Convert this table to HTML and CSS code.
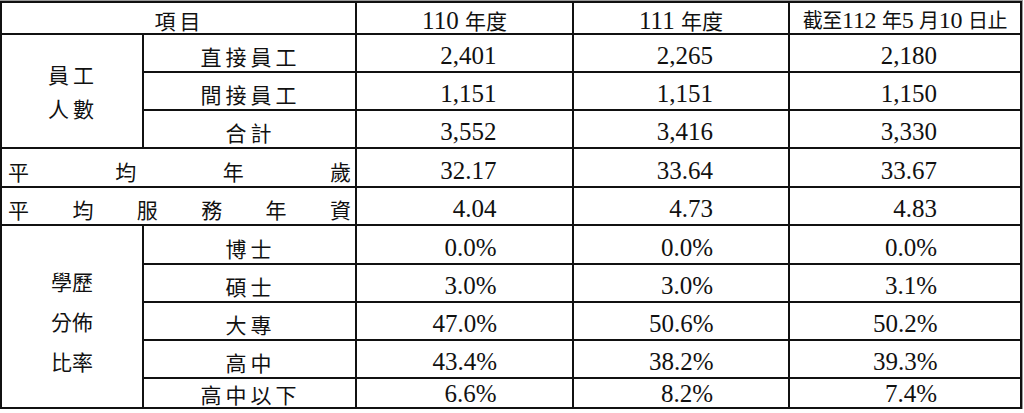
FILE: index.html
```html
<!DOCTYPE html>
<html lang="zh-Hant">
<head>
<meta charset="utf-8">
<title>員工人數統計</title>
<link rel="stylesheet" href="styles.css">
</head>
<body>
<table class="stats">
  <colgroup>
    <col class="c1"><col class="c2"><col class="c3"><col class="c4"><col class="c5">
  </colgroup>
  <thead>
    <tr class="head">
      <th colspan="2" class="lbl sp">項目</th>
      <th class="yr">110 <span class="cjk">年度</span></th>
      <th class="yr">111 <span class="cjk">年度</span></th>
      <th class="yr narrow"><span class="cjk">截至</span>112 <span class="cjk">年</span>5 <span class="cjk">月</span>10 <span class="cjk">日止</span></th>
    </tr>
  </thead>
  <tbody>
    <tr class="row">
      <td rowspan="3" class="group sp"><div class="stack"><span>員工</span><span>人數</span></div></td>
      <td class="lbl sp">直接員工</td>
      <td class="num"><span>2,401</span></td>
      <td class="num"><span>2,265</span></td>
      <td class="num"><span>2,180</span></td>
    </tr>
    <tr class="row">
      <td class="lbl sp">間接員工</td>
      <td class="num"><span>1,151</span></td>
      <td class="num"><span>1,151</span></td>
      <td class="num"><span>1,150</span></td>
    </tr>
    <tr class="row">
      <td class="lbl sp">合計</td>
      <td class="num"><span>3,552</span></td>
      <td class="num"><span>3,416</span></td>
      <td class="num"><span>3,330</span></td>
    </tr>
    <tr class="row tall">
      <td colspan="2" class="spread"><div><span>平</span><span>均</span><span>年</span><span>歲</span></div></td>
      <td class="num"><span>32.17</span></td>
      <td class="num"><span>33.64</span></td>
      <td class="num"><span>33.67</span></td>
    </tr>
    <tr class="row">
      <td colspan="2" class="spread"><div><span>平</span><span>均</span><span>服</span><span>務</span><span>年</span><span>資</span></div></td>
      <td class="num"><span>4.04</span></td>
      <td class="num"><span>4.73</span></td>
      <td class="num"><span>4.83</span></td>
    </tr>
    <tr class="row tall">
      <td rowspan="5" class="group edu"><div class="stack"><span>學歷</span><span>分佈</span><span>比率</span></div></td>
      <td class="lbl sp">博士</td>
      <td class="num"><span>0.0%</span></td>
      <td class="num"><span>0.0%</span></td>
      <td class="num"><span>0.0%</span></td>
    </tr>
    <tr class="row">
      <td class="lbl sp">碩士</td>
      <td class="num"><span>3.0%</span></td>
      <td class="num"><span>3.0%</span></td>
      <td class="num"><span>3.1%</span></td>
    </tr>
    <tr class="row">
      <td class="lbl sp">大專</td>
      <td class="num"><span>47.0%</span></td>
      <td class="num"><span>50.6%</span></td>
      <td class="num"><span>50.2%</span></td>
    </tr>
    <tr class="row">
      <td class="lbl sp">高中</td>
      <td class="num"><span>43.4%</span></td>
      <td class="num"><span>38.2%</span></td>
      <td class="num"><span>39.3%</span></td>
    </tr>
    <tr class="row last">
      <td class="lbl sp">高中以下</td>
      <td class="num"><span>6.6%</span></td>
      <td class="num"><span>8.2%</span></td>
      <td class="num"><span>7.4%</span></td>
    </tr>
  </tbody>
</table>
</body>
</html>
```

FILE: styles.css
```css
html, body {
  margin: 0;
  padding: 0;
  background: #ffffff;
}

body {
  padding: 1px 0 0 0;
}

.stats {
  border-collapse: collapse;
  table-layout: fixed;
  width: 1020px;
  border: 2px solid #111;
  box-shadow: 0 0 0 1px #9a9a9a;
  font-family: "Liberation Serif", "Noto Sans CJK TC", serif;
  font-size: 25px;
  color: #111;
}

.c1 { width: 142px; }
.c2 { width: 213px; }
.c3 { width: 217px; }
.c4 { width: 216px; }
.c5 { width: 232px; }

.stats th,
.stats td {
  border: 2px solid #111;
  padding: 0;
  text-align: center;
  vertical-align: middle;
  font-weight: normal;
  line-height: 26px;
}

.head { height: 32px; }
.row { height: 38px; }
.row.tall { height: 39px; }
.row.last { height: 30px; }

.head th {
  padding-top: 4px;
  line-height: 24px;
}

.cjk {
  font-family: "Noto Sans CJK TC", sans-serif;
  font-size: 21px;
  font-weight: 400;
}

.yr { white-space: nowrap; }

.narrow {
  font-size: 24px;
  letter-spacing: -0.3px;
}

.narrow .cjk { font-size: 20px; }

.lbl {
  font-family: "Noto Sans CJK TC", sans-serif;
  font-size: 21px;
}

.sp { letter-spacing: 4px; text-indent: 2px; }

.row .lbl,
.row .num,
.row .spread { padding-top: 6px; }

.row.last .lbl,
.row.last .num { padding-top: 1px; }

.num span {
  display: inline-block;
  width: 64px;
  text-align: right;
}

.group {
  font-family: "Noto Sans CJK TC", sans-serif;
  font-size: 21px;
  line-height: 22px;
  padding-top: 4px;
}

.stack {
  display: flex;
  flex-direction: column;
  align-items: center;
  gap: 8px;
}

.group.edu { padding-top: 8px; }

.group.edu .stack { gap: 14px; }

.spread {
  font-family: "Noto Sans CJK TC", sans-serif;
  font-size: 21px;
}

.spread div {
  display: flex;
  justify-content: space-between;
  padding: 0 4px 0 6px;
}
```
